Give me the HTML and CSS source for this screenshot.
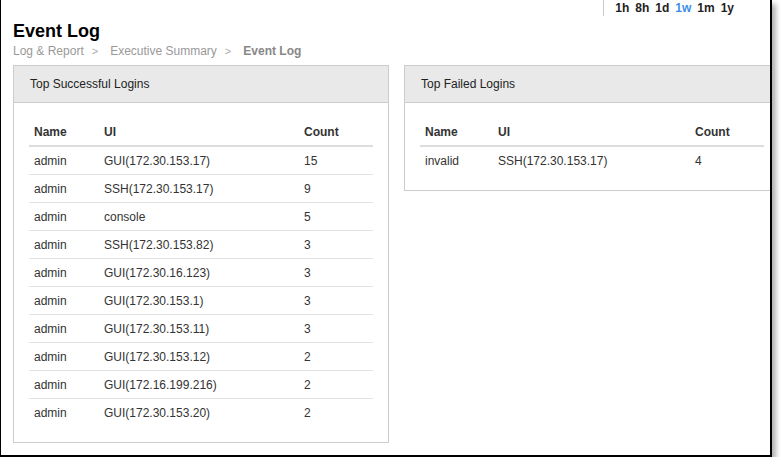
FILE: index.html
```html
<!DOCTYPE html>
<html>
<head>
<meta charset="utf-8">
<link rel="stylesheet" href="styles.css">
</head>
<body>
<div class="frame">
  <div class="topbar">
    <div class="ranges">
      <span>1h</span><span>8h</span><span>1d</span><span class="active">1w</span><span>1m</span><span>1y</span>
    </div>
  </div>
  <h1 class="title">Event Log</h1>
  <div class="crumbs">
    <span>Log &amp; Report</span><span class="sep">&gt;</span><span>Executive Summary</span><span class="sep">&gt;</span><span class="current">Event Log</span>
  </div>
  <div class="panels">
    <div class="panel">
      <div class="panel-head">Top Successful Logins</div>
      <div class="panel-body">
        <table class="grid left">
          <thead><tr><th class="c1">Name</th><th class="c2">UI</th><th class="c3">Count</th></tr></thead>
          <tbody>
            <tr><td>admin</td><td>GUI(172.30.153.17)</td><td>15</td></tr>
            <tr><td>admin</td><td>SSH(172.30.153.17)</td><td>9</td></tr>
            <tr><td>admin</td><td>console</td><td>5</td></tr>
            <tr><td>admin</td><td>SSH(172.30.153.82)</td><td>3</td></tr>
            <tr><td>admin</td><td>GUI(172.30.16.123)</td><td>3</td></tr>
            <tr><td>admin</td><td>GUI(172.30.153.1)</td><td>3</td></tr>
            <tr><td>admin</td><td>GUI(172.30.153.11)</td><td>3</td></tr>
            <tr><td>admin</td><td>GUI(172.30.153.12)</td><td>2</td></tr>
            <tr><td>admin</td><td>GUI(172.16.199.216)</td><td>2</td></tr>
            <tr><td>admin</td><td>GUI(172.30.153.20)</td><td>2</td></tr>
          </tbody>
        </table>
      </div>
    </div>
    <div class="panel">
      <div class="panel-head">Top Failed Logins</div>
      <div class="panel-body">
        <table class="grid right">
          <thead><tr><th class="c1">Name</th><th class="c2">UI</th><th class="c3">Count</th></tr></thead>
          <tbody>
            <tr><td>invalid</td><td>SSH(172.30.153.17)</td><td>4</td></tr>
          </tbody>
        </table>
      </div>
    </div>
  </div>
</div>
</body>
</html>
```

FILE: styles.css
```css
html, body {
  margin: 0;
  padding: 0;
  background: #ffffff;
}
body {
  font-family: "Liberation Sans", Arial, sans-serif;
  color: #333;
}
.frame {
  width: 769px;
  height: 455px;
  border-left: 1px solid #000;
  border-right: 2px solid #000;
  border-bottom: 2px solid #000;
  box-shadow: 4px 4px 5px rgba(0,0,0,0.3);
  overflow: hidden;
  position: relative;
  background: #fff;
}
.topbar {
  height: 17px;
  display: flex;
  justify-content: flex-end;
}
.ranges {
  border-left: 1px solid #ccc;
  padding-left: 11px;
  padding-right: 36px;
  display: flex;
  gap: 6px;
  font-size: 12px;
  font-weight: bold;
  color: #222;
  line-height: 17px;
  height: 16px;
}
.ranges .active {
  color: #3d8ee8;
}
.title {
  margin: 3px 0 0 12px;
  font-size: 18px;
  font-weight: bold;
  color: #000;
  line-height: 22px;
}
.crumbs {
  margin: 1px 0 0 12px;
  font-size: 12px;
  color: #999;
  line-height: 16px;
}
.crumbs .sep {
  margin: 0 12px 0 8px;
  font-size: 11px;
  color: #aaa;
}
.crumbs .current {
  font-weight: bold;
  color: #888;
}
.panels {
  display: flex;
  gap: 15px;
  margin: 6px 0 0 12px;
  align-items: flex-start;
}
.panel {
  width: 374px;
  flex: none;
  border: 1px solid #ccc;
  background: #fff;
}
.panel-head {
  height: 36px;
  line-height: 36px;
  background: #e9e9e9;
  border-bottom: 1px solid #ccc;
  padding-left: 16px;
  font-size: 12px;
  color: #222;
}
.panel-body {
  padding: 15px 15px 16px 15px;
}
.grid {
  width: 344px;
  border-collapse: collapse;
  font-size: 12px;
  color: #333;
}
.grid th {
  text-align: left;
  font-weight: bold;
  color: #333;
  height: 27px;
  padding: 0 0 0 5px;
  border-bottom: 2px solid #ddd;
  vertical-align: middle;
}
.grid td {
  height: 27px;
  padding: 0 0 0 5px;
  border-bottom: 1px solid #e2e2e2;
  vertical-align: middle;
}
.grid tbody tr:last-child td {
  border-bottom: none;
}
.left .c1 { width: 65px; }
.left .c2 { width: 195px; }
.right .c1 { width: 68px; }
.right .c2 { width: 192px; }
```
